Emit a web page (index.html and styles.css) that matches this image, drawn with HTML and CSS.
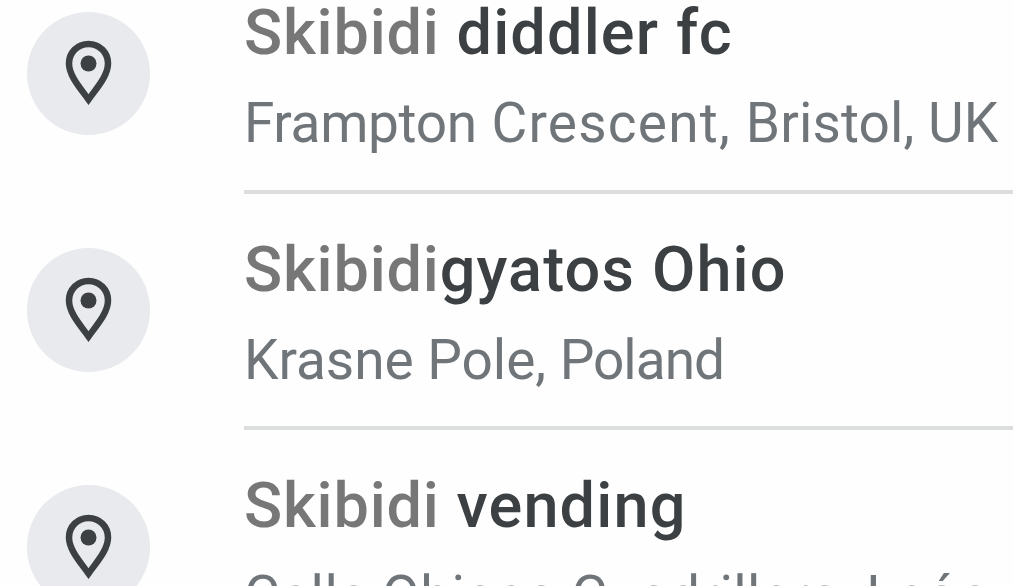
FILE: index.html
```html
<!DOCTYPE html>
<html lang="en">
<head>
<meta charset="utf-8">
<title>Places</title>
<link rel="stylesheet" href="styles.css">
</head>
<body>
<svg width="0" height="0" class="defs"><symbol id="pin" viewBox="0 0 48 66"><path d="M24.500 5C13.500 5 5 13.500 5 24.500C5 36 14.500 47 24.500 60.500C34.500 47 44 36 44 24.500C44 13.500 35.500 5 24.500 5Z" fill="none" stroke="currentColor" stroke-width="6.500"/><circle cx="24.500" cy="24.500" r="8" fill="currentColor"/></symbol></svg>
<ul class="places">
<li class="place">
<span class="badge"><svg class="pin"><use href="#pin"/></svg></span>
<div class="text"><div class="title"><span class="match">Skibidi</span><span class="rest"> diddler fc</span></div><div class="address"><span class="tight">Frampton</span><span class="wide"> Crescent, </span>Bristol, UK</div></div>
</li>
<li class="place">
<span class="badge"><svg class="pin"><use href="#pin"/></svg></span>
<div class="text"><div class="title"><span class="match">Skibidi</span><span class="rest">gyatos Ohio</span></div><div class="address"><span class="snug">Krasne Pole, </span><span class="tighter">Poland</span></div></div>
</li>
<li class="place">
<span class="badge"><svg class="pin"><use href="#pin"/></svg></span>
<div class="text"><div class="title"><span class="match">Skibidi</span><span class="rest"> vending</span></div><div class="address calle">Calle Obispo Cuadrillero, León</div></div>
</li>
</ul>
</body>
</html>
```
FILE: styles.css
```css
html, body { height: 100%; }
body { margin: 0; overflow: hidden; background: #fefefe; font-family: Roboto, "Open Sans", sans-serif; }
.defs { display: block; }
.places { list-style: none; box-sizing: border-box; height: 629.25px; overflow: hidden; margin: -43.25px 0 0; padding: 0 0 0 26.5px; }
.place { display: grid; grid-template-columns: 123.5px 1fr; column-gap: 94px; height: 236.75px; }
.badge { display: grid; place-items: center; align-self: center; width: 123.5px; height: 123.5px; margin-bottom: 3.5px; border-radius: 50%; background: #e8eaed; color: #3c4043; }
.pin { width: 48px; height: 66px; display: block; margin-bottom: 2px; }
.text { box-sizing: border-box; height: 236.75px; padding-top: 39px; border-bottom: 4px solid #dcdddd; white-space: pre; }
.title { font-size: 63px; line-height: 74px; font-weight: 500; }
.address { margin-top: 21px; font-size: 55px; line-height: 64px; color: #70757a; letter-spacing: 0.1px; }
.match { color: #777; letter-spacing: 0.8px; }
.rest { color: #3c4043; letter-spacing: 1.15px; }
.tight { letter-spacing: -0.35px; }
.wide { letter-spacing: 1.2px; }
.snug { letter-spacing: -0.05px; }
.tighter { letter-spacing: -1px; }
.calle { letter-spacing: 0.45px; }
```
